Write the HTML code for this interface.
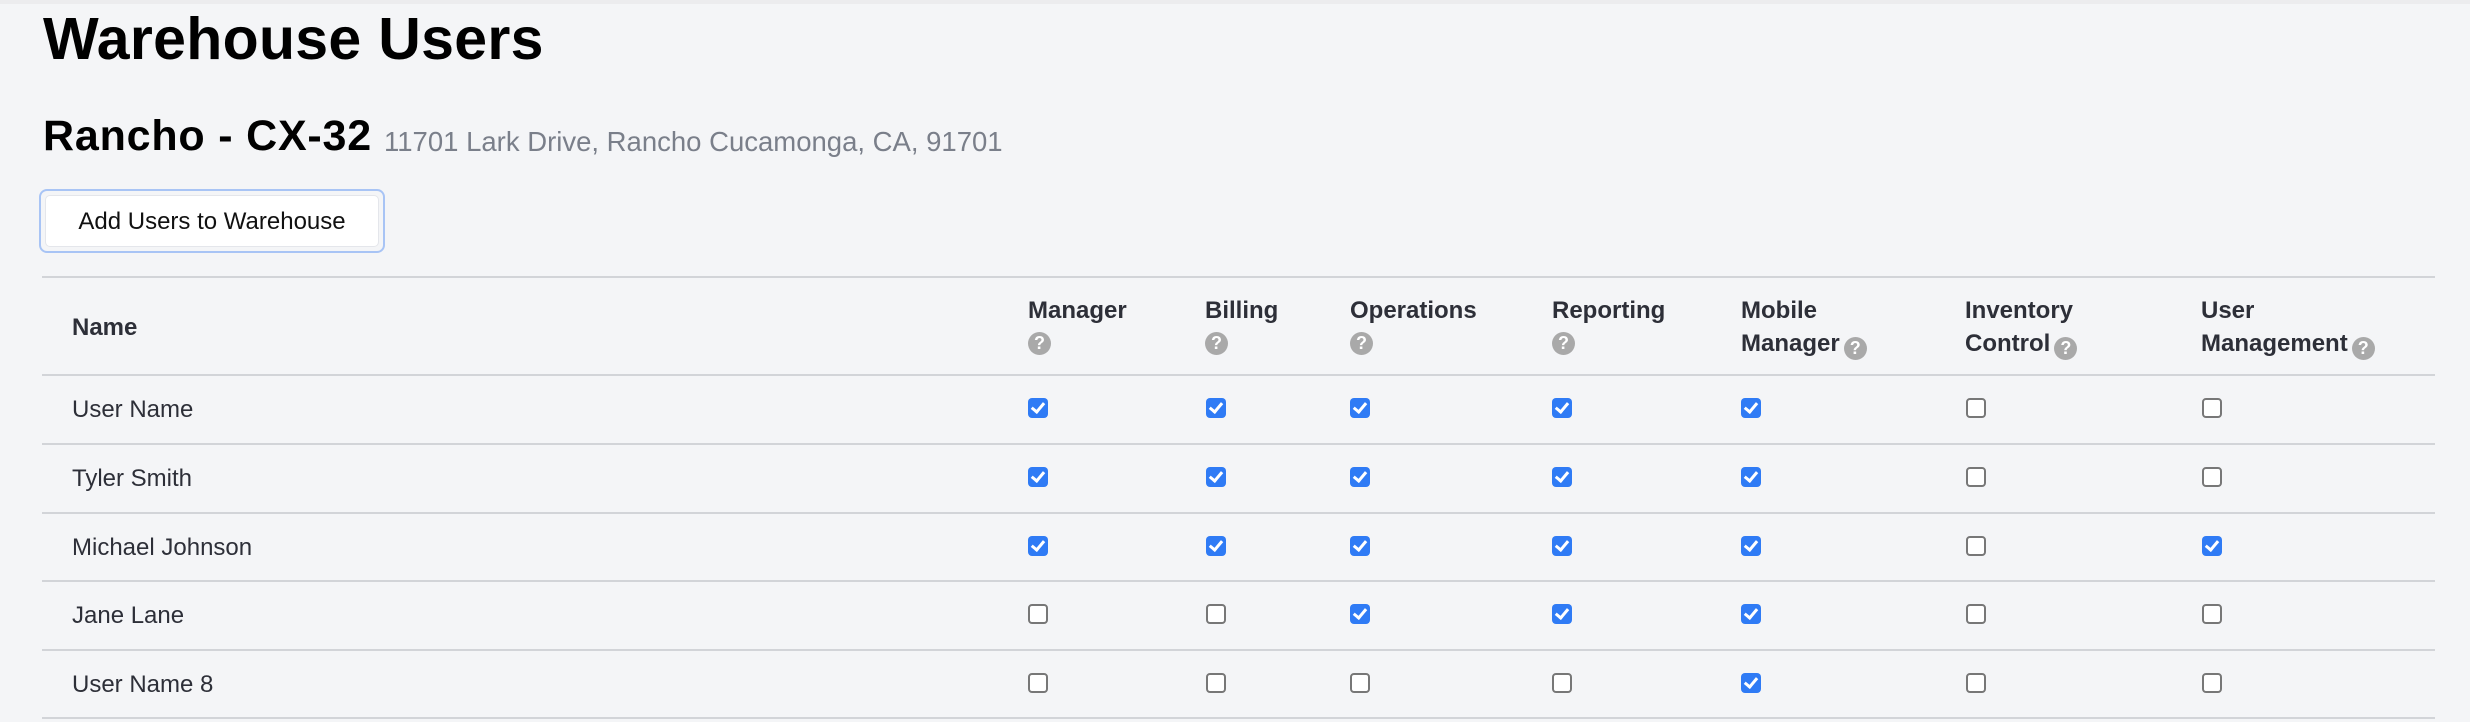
<!DOCTYPE html>
<html><head><meta charset="utf-8"><style>
body{margin:0;width:2470px;height:722px;background:#f4f5f7;font-family:"Liberation Sans",sans-serif;position:relative;overflow:hidden}
.a{position:absolute;white-space:nowrap}
h1{position:absolute;left:43px;top:5px;margin:0;font-size:59px;font-weight:bold;color:#000;letter-spacing:0.3px}
.sub{left:43px;top:112px;font-size:43px;font-weight:bold;color:#000;letter-spacing:0.8px}
.addr{left:384px;top:126px;font-size:27.5px;color:#7a7f8a}
.btn{position:absolute;left:39px;top:189px;width:346px;height:64px;border:2px solid #a8c4f5;border-radius:8px;box-sizing:border-box}
.btn div{position:absolute;left:4px;top:4px;right:4px;bottom:4px;background:#fff;border:1px solid #e4e6eb;border-radius:5px;font-size:24px;line-height:52px;text-align:center;color:#111}
.hl{position:absolute;left:42px;width:2393px;height:2px;background:#d2d4d8}
.th{font-size:24px;font-weight:bold;color:#2d2f38;line-height:33px}
.q{display:inline-block;width:23px;height:23px;border-radius:50%;background:#a9a9a9;color:#fff;font-size:18px;line-height:23px;text-align:center;font-weight:bold;vertical-align:-3px;margin-left:4px}
.q0{vertical-align:2px}
.td{font-size:24px;color:#2d2f38}
.cb{position:absolute;width:20px;height:20px;border-radius:4px;box-sizing:border-box}
.on{background:#2f7bf5}
.on:after{content:"";position:absolute;left:6px;top:2px;width:5px;height:10px;border:solid #fff;border-width:0 3px 3px 0;transform:rotate(40deg)}
.off{background:#fff;border:2px solid #777}
</style></head><body>
<div style="position:absolute;left:0;top:0;width:2470px;height:4px;background:#ececee"></div>
<h1>Warehouse Users</h1>
<div class="a sub">Rancho - CX-32</div>
<div class="a addr">11701 Lark Drive, Rancho Cucamonga, CA, 91701</div>
<div class="btn"><div>Add Users to Warehouse</div></div>
<div class="hl" style="top:276px"></div>
<div class="hl" style="top:374px"></div>
<div class="hl" style="top:443px"></div>
<div class="hl" style="top:512px"></div>
<div class="hl" style="top:580px"></div>
<div class="hl" style="top:649px"></div>
<div class="hl" style="top:717px"></div>
<div class="a th" style="left:72px;top:311px">Name</div>
<div class="a th" style="left:1028px;top:294px">Manager<br><span class="q q0" style="margin:0">?</span></div>
<div class="a th" style="left:1205px;top:294px">Billing<br><span class="q q0" style="margin:0">?</span></div>
<div class="a th" style="left:1350px;top:294px">Operations<br><span class="q q0" style="margin:0">?</span></div>
<div class="a th" style="left:1552px;top:294px">Reporting<br><span class="q q0" style="margin:0">?</span></div>
<div class="a th" style="left:1741px;top:294px">Mobile<br>Manager<span class="q">?</span></div>
<div class="a th" style="left:1965px;top:294px">Inventory<br>Control<span class="q">?</span></div>
<div class="a th" style="left:2201px;top:294px">User<br>Management<span class="q">?</span></div>
<div class="a td" style="left:72px;top:396px">User Name</div>
<div class="a td" style="left:72px;top:465px">Tyler Smith</div>
<div class="a td" style="left:72px;top:534px">Michael Johnson</div>
<div class="a td" style="left:72px;top:602px">Jane Lane</div>
<div class="a td" style="left:72px;top:671px">User Name 8</div>
<div id="cbs"></div>
<script>
var xs=[1028,1206,1350,1552,1741,1966,2202],ys=[398,467,536,604,673];
var d=["1111100","1111100","1111101","0011100","0000100"];
var h="";for(var r=0;r<5;r++)for(var c=0;c<7;c++)h+='<div class="cb '+(d[r][c]=="1"?"on":"off")+'" style="left:'+xs[c]+'px;top:'+ys[r]+'px"></div>';
document.getElementById("cbs").innerHTML=h;
</script>
</body></html>
